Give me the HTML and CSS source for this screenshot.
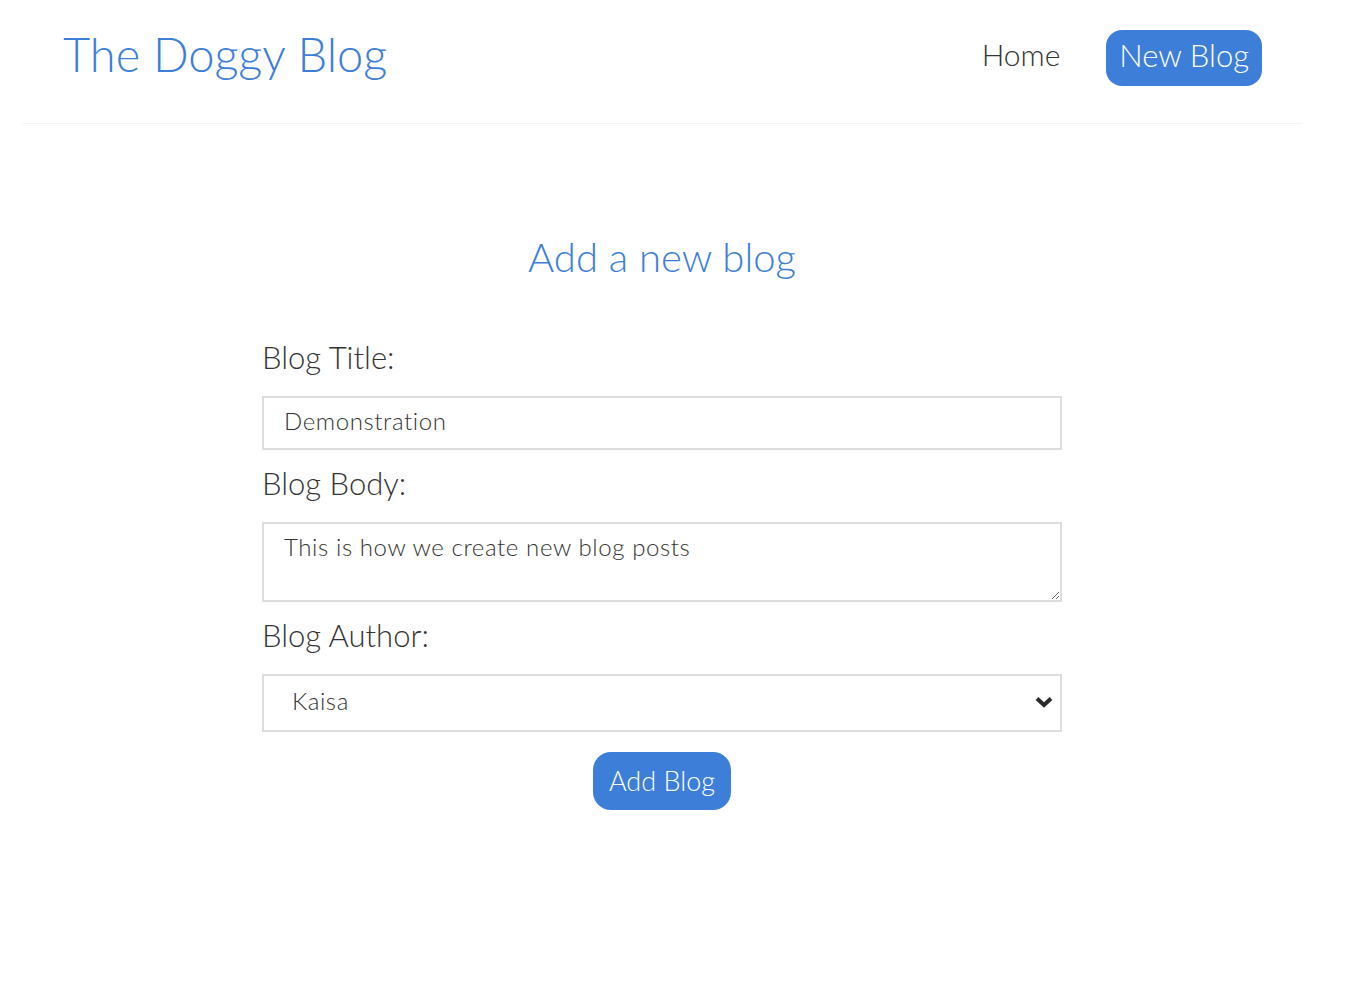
FILE: index.html
```html
<!DOCTYPE html>
<html lang="en">
<head>
<meta charset="utf-8">
<title>The Doggy Blog</title>
<link rel="stylesheet" href="styles.css">
</head>
<body>
<div class="page">
  <nav class="navbar">
    <h1 class="logo">The Doggy Blog</h1>
    <div class="links">
      <a href="#" class="home-link">Home</a>
      <a href="#" class="new-link">New Blog</a>
    </div>
  </nav>
  <main class="create">
    <h2 class="create-title">Add a new blog</h2>
    <form class="form">
      <label class="label">Blog Title:</label>
      <input class="field" type="text" value="Demonstration">
      <label class="label">Blog Body:</label>
      <textarea class="field area">This is how we create new blog posts</textarea>
      <label class="label">Blog Author:</label>
      <div class="select-wrap">
        <select class="field select">
          <option>Kaisa</option>
          <option>Yoshi</option>
        </select>
        <svg class="chevron" width="18" height="12" viewBox="0 0 18 12" aria-hidden="true"><polyline points="2,2.5 9,9 16,2.5" fill="none" stroke="#2b2b2b" stroke-width="4"/></svg>
      </div>
      <div class="actions">
        <button type="button" class="submit">Add Blog</button>
      </div>
    </form>
  </main>
</div>
</body>
</html>
```
FILE: styles.css
```css
* { box-sizing: border-box; }
body {
  margin: 0;
  background: #fff;
  font-family: "Lato", "Liberation Sans", sans-serif;
  font-weight: 300;
  color: #333;
}
.page {
  width: 1280px;
  margin-left: 22px;
}
.navbar {
  display: flex;
  align-items: center;
  justify-content: space-between;
  padding: 30px 40px 37px 41px;
  border-bottom: 1px solid #f2f2f2;
}
.logo {
  margin: 0 0 8px;
  font-size: 47px;
  font-weight: 300;
  line-height: 48px;
  color: #3d7ed9;
}
.links {
  display: flex;
  align-items: center;
}
.home-link {
  text-decoration: none;
  color: #333;
  font-size: 30px;
  line-height: 48px;
  padding-bottom: 8px;
  margin-right: 46px;
}
.new-link {
  display: block;
  height: 56px;
  line-height: 50px;
  padding: 0 13px 6px;
  border-radius: 16px;
  background: #3d7ed9;
  color: #fff;
  text-decoration: none;
  font-size: 31px;
}
.create {
  max-width: 800px;
  margin: 0 auto;
}
.create-title {
  margin: 109px 0 63px;
  text-align: center;
  font-size: 40px;
  line-height: 48px;
  font-weight: 300;
  color: #3d7ed9;
}
.label {
  display: block;
  font-size: 31px;
  line-height: 26px;
  padding-bottom: 6px;
  color: #333;
}
.field {
  display: block;
  width: 100%;
  margin: 20px 0;
  padding: 10px 20px 14px;
  border: 2px solid #ddd;
  border-radius: 0;
  font-family: "Lato", "Liberation Sans", sans-serif;
  font-weight: 300;
  font-size: 24px;
  line-height: 26px;
  letter-spacing: 0.6px;
  color: #333;
  background: #fff;
  outline: none;
}
.area {
  height: 80px;
  resize: vertical;
}
.select-wrap {
  position: relative;
}
.select {
  -webkit-appearance: none;
  appearance: none;
  height: 58px;
  padding: 0 28px 4px;
  margin-bottom: 20px;
}
.chevron {
  position: absolute;
  right: 9px;
  top: 22px;
  pointer-events: none;
}
.actions {
  display: flex;
  justify-content: center;
}
.submit {
  height: 58px;
  padding: 0 16px;
  border: 0;
  border-radius: 18px;
  background: #3d7ed9;
  color: #fff;
  font-family: "Lato", "Liberation Sans", sans-serif;
  font-weight: 300;
  font-size: 27px;
  line-height: 56px;
  cursor: pointer;
}
```
